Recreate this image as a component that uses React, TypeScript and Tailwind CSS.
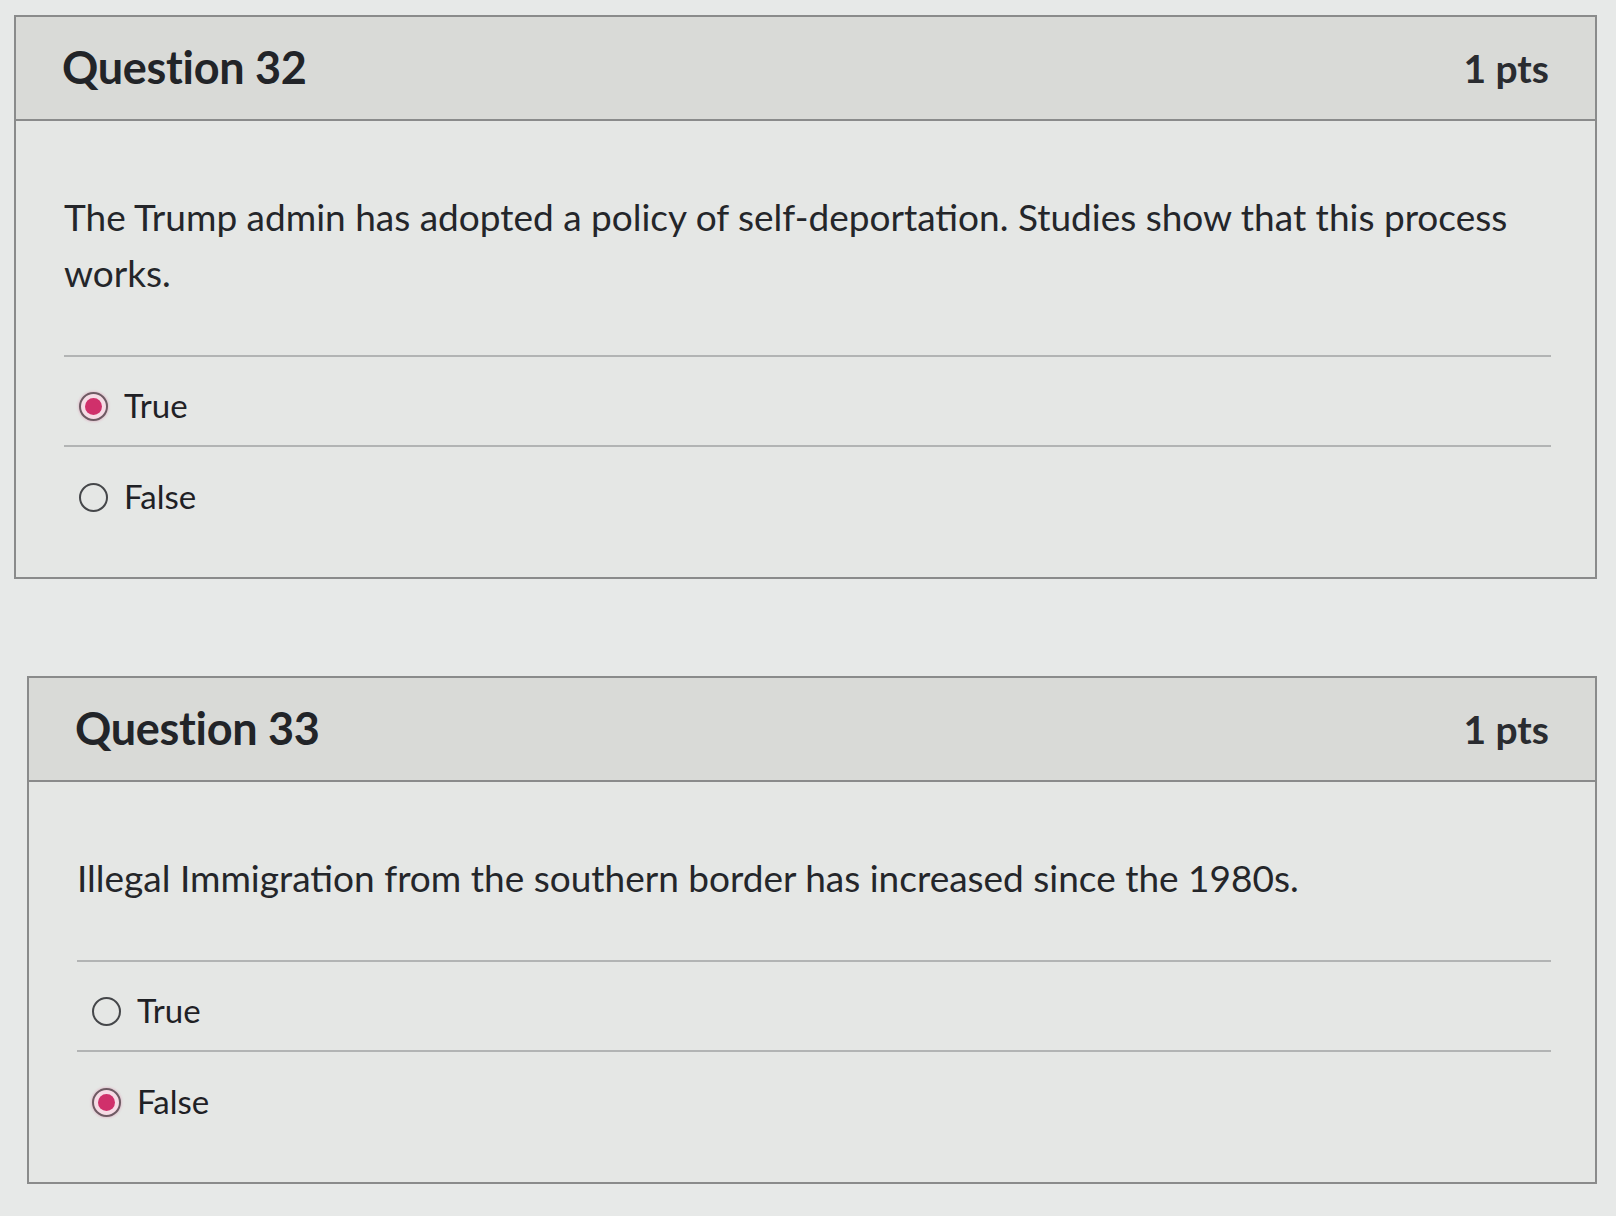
type Choice = { label: string; selected: boolean };

function Radio({ selected }: { selected: boolean }) {
  if (selected) {
    return (
      <span className="flex h-[29px] w-[29px] shrink-0 items-center justify-center rounded-full border-2 border-[#6e5a63] bg-[#f6dbe5] shadow-[0_0_2px_1px_rgba(214,120,160,0.3)]">
        <span className="h-[17px] w-[17px] rounded-full bg-[#d0306b]" />
      </span>
    );
  }
  return <span className="h-[29px] w-[29px] shrink-0 rounded-full border-[2.5px] border-[#45474a]" />;
}

function QuestionCard({
  title,
  text,
  choices,
  className,
}: {
  title: string;
  text: string;
  choices: Choice[];
  className: string;
}) {
  return (
    <div className={`border-2 border-[#8a8b8b] bg-[#e5e7e5] ${className}`}>
      <div className="flex h-[104px] items-center justify-between border-b-2 border-[#8a8b8b] bg-[#d9dad7] pl-[46px] pr-[46px]">
        <h2 className="text-[45px] font-bold tracking-[-0.3px] text-[#222428]">{title}</h2>
        <span className="text-[39px] font-bold text-[#2a2c30]">1 pts</span>
      </div>
      <div className="pl-[48px] pr-[44px] pt-[68px] pb-[40px]">
        <p className="text-[37px] leading-[56px] text-[#24262a]">{text}</p>
        <div className="mt-[54px] border-t-2 border-[#b2b4b4]">
          {choices.map((c, i) => (
            <div
              key={c.label}
              className={`flex h-[90px] items-center gap-[16px] pl-[15px] pt-[10px] ${
                i === 0 ? "border-b-2 border-[#b2b4b4]" : ""
              }`}
            >
              <Radio selected={c.selected} />
              <span className="text-[33px] text-[#1f2125]">{c.label}</span>
            </div>
          ))}
        </div>
      </div>
    </div>
  );
}

export default function App() {
  return (
    <div
      className="min-h-screen bg-[#e7e9e8] pt-[15px] pb-[30px]"
      style={{ fontFamily: "Lato, 'Open Sans', sans-serif" }}
    >
      <QuestionCard
        className="ml-[14px] mr-[19px]"
        title="Question 32"
        text="The Trump admin has adopted a policy of self-deportation. Studies show that this process works."
        choices={[
          { label: "True", selected: true },
          { label: "False", selected: false },
        ]}
      />
      <QuestionCard
        className="ml-[27px] mr-[19px] mt-[97px]"
        title="Question 33"
        text="Illegal Immigration from the southern border has increased since the 1980s."
        choices={[
          { label: "True", selected: false },
          { label: "False", selected: true },
        ]}
      />
    </div>
  );
}
